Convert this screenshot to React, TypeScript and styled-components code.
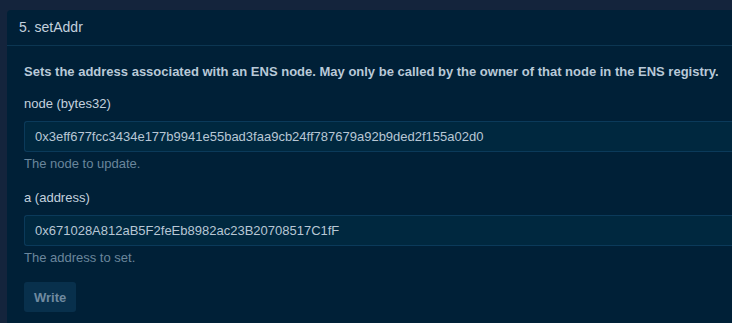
import React from 'react'
import styled, { createGlobalStyle } from 'styled-components'

const GlobalStyle = createGlobalStyle`
  html, body {
    margin: 0;
    padding: 0;
    background: #14243c;
    overflow: hidden;
  }
  body {
    font-family: "Liberation Sans", Arial, sans-serif;
  }
`

const Page = styled.div`
  padding: 10px 0 0 7px;
  width: 760px;
`

const Card = styled.section`
  background: #002037;
  border-radius: 4px 4px 0 0;
  min-height: 320px;
`

const Header = styled.div`
  height: 35px;
  line-height: 35px;
  padding: 0 12px;
  font-size: 14px;
  color: #c3d1de;
  border-bottom: 1px solid #0c3652;
`

const Body = styled.div`
  padding: 16px 17px;
  display: flex;
  flex-direction: column;
`

const Description = styled.p`
  margin: 0 0 12px;
  font-size: 13px;
  line-height: 20px;
  font-weight: bold;
  color: #b9c9d8;
`

const Field = styled.div`
  display: flex;
  flex-direction: column;
  margin-bottom: 15px;
`

const Label = styled.label`
  font-size: 13px;
  line-height: 20px;
  color: #c3d1de;
  margin-bottom: 7px;
`

const Input = styled.input`
  box-sizing: border-box;
  height: 31px;
  padding: 0 10px;
  background: #00283f;
  border: 1px solid #0b3a5a;
  border-right: none;
  border-radius: 3px 0 0 3px;
  color: #b8c7d5;
  font-family: "Liberation Sans", Arial, sans-serif;
  font-size: 13px;
  outline: none;
  margin-right: -17px;
`

const Help = styled.div`
  margin-top: 3px;
  font-size: 13px;
  line-height: 18px;
  color: #6a869c;
`

const Button = styled.button`
  align-self: flex-start;
  height: 30px;
  padding: 0 10px;
  border: none;
  border-radius: 3px;
  background: #08304c;
  color: #6f8aa0;
  font-family: "Liberation Sans", Arial, sans-serif;
  font-size: 13px;
  font-weight: bold;
`

const fields = [
  {
    label: 'node (bytes32)',
    value: '0x3eff677fcc3434e177b9941e55bad3faa9cb24ff787679a92b9ded2f155a02d0',
    help: 'The node to update.',
  },
  {
    label: 'a (address)',
    value: '0x671028A812aB5F2feEb8982ac23B20708517C1fF',
    help: 'The address to set.',
  },
]

export default function App() {
  return (
    <>
      <GlobalStyle />
      <Page>
        <Card>
          <Header>5. setAddr</Header>
          <Body>
            <Description>
              Sets the address associated with an ENS node. May only be called by the owner of that node in the ENS registry.
            </Description>
            {fields.map((f) => (
              <Field key={f.label}>
                <Label>{f.label}</Label>
                <Input defaultValue={f.value} readOnly />
                <Help>{f.help}</Help>
              </Field>
            ))}
            <Button>Write</Button>
          </Body>
        </Card>
      </Page>
    </>
  )
}
